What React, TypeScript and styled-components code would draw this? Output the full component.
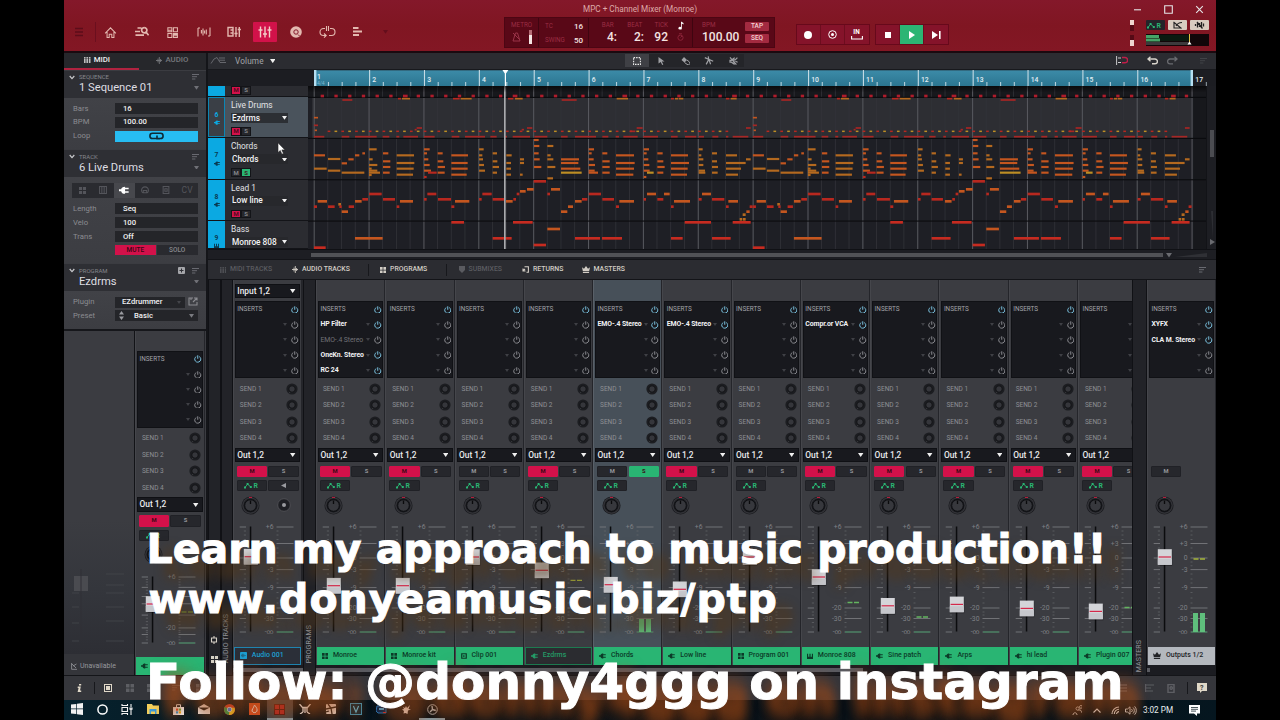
import React from "react";
import styled, { createGlobalStyle, css } from "styled-components";

const Global = createGlobalStyle`
  * { box-sizing: border-box; }
  body { margin: 0; background: #000; overflow: hidden; }
  svg { display: block; flex: none; }
`;

const RED = "#d3114a";
const GREEN = "#29b573";
const CYAN = "#0ba9e2";

const Screen = styled.div`
  position: relative;
  width: 1280px;
  height: 720px;
  padding: 0 64px;
  background: #000;
  overflow: hidden;
  font-family: Roboto, "Liberation Sans", sans-serif;
  color: #e6e6e8;
  line-height: 1;
  white-space: nowrap;
`;
const Window = styled.div`
  width: 1152px;
  height: 720px;
  display: flex;
  flex-direction: column;
  background: #141519;
  overflow: hidden;
`;

/* ---------- header ---------- */
const Header = styled.header`
  height: 51px;
  flex: none;
  display: flex;
  align-items: flex-start;
  background: linear-gradient(#84182a, #801622 50%, #831724);
  position: relative;
`;
const HeadIcons = styled.div`
  width: 440px;
  display: flex;
  padding-top: 22px;
`;
const HeadIcon = styled.div<{ $w?: number; $on?: boolean; $dim?: boolean }>`
  width: ${(p) => p.$w ?? 31}px;
  height: 20px;
  display: flex;
  align-items: center;
  justify-content: center;
  color: ${(p) => (p.$dim ? "#5c0d1a" : "#e3b9b0")};
  ${(p) => p.$on && css`background: #d2124a; border-radius: 1px; color: #f3cdc8;`}
`;
const HeadSplit = styled.div`
  width: 1px;
  height: 20px;
  background: #6b0f1e;
`;
const Display = styled.div`
  width: 271px;
  height: 31px;
  margin-top: 17px;
  display: flex;
  background: #590817;
  border: 1px solid #4c0613;
`;
const DisplayCell = styled.div<{ $w: number }>`
  width: ${(p) => p.$w}px;
  border-right: 1px solid #3f0510;
  display: flex;
  flex-direction: column;
  padding: 3.5px 5px 0 6px;
  gap: 4px;
`;
const DRow = styled.div`
  display: flex;
  align-items: center;
  justify-content: space-between;
  height: 10px;
`;
const Dim = styled.span`
  font-size: 6.3px;
  color: #9b2d44;
`;
const Num = styled.span<{ $big?: boolean }>`
  font-size: ${(p) => (p.$big ? 12 : 8)}px;
  font-weight: 500;
  color: #f4e4e2;
`;
const BeatGrid = styled.div`
  display: grid;
  grid-template-columns: 31px 27px 21px 16px;
  grid-template-rows: 7px 16px;
  align-items: center;
  justify-items: end;
  padding: 4px 0 0 0;
  width: 104px;
  border-right: 1px solid #3f0510;
`;
const BpmGrid = styled.div`
  display: flex;
  padding: 4px 5px 0 9px;
  width: 81px;
  justify-content: space-between;
`;
const Stack = styled.div<{ $gap?: number }>`
  display: flex;
  flex-direction: column;
  gap: ${(p) => p.$gap ?? 0}px;
`;
const Chip = styled.div`
  width: 24px;
  height: 9px;
  border-radius: 1px;
  background: #a32a40;
  color: #f2d3d3;
  font-size: 6.5px;
  font-weight: 500;
  display: flex;
  align-items: center;
  justify-content: center;
`;
const Transport = styled.div<{ $ml: number }>`
  margin: 24px 0 0 ${(p) => p.$ml}px;
  height: 21px;
  flex: none;
  display: flex;
  border: 1px solid #67091b;
`;
const TBtn = styled.div<{ $on?: boolean }>`
  width: 24px;
  flex: none;
  display: flex;
  align-items: center;
  justify-content: center;
  color: #fff;
  background: ${(p) => (p.$on ? "#2cb574" : "#85132a")};
  border-right: 1px solid #6d0d1e;
  &:last-child { border-right: none; }
  font-size: 6.4px;
  font-weight: 700;
`;
const InMark = styled.div`
  display: flex;
  flex-direction: column;
  align-items: center;
`;
const Title = styled.div`
  position: absolute;
  top: 4.5px;
  left: 0;
  right: 0;
  text-align: center;
  font-size: 8.2px;
  color: #dda9a8;
`;
const WinBtns = styled.div`
  position: absolute;
  right: 12px;
  top: 4.5px;
  display: flex;
  gap: 22px;
`;
const Status = styled.div`
  margin: 20px 0 0 181px;
  display: flex;
  gap: 12px;
`;
const StatusRow = styled.div`
  display: flex;
  gap: 3.5px;
`;
const StatusChip = styled.div<{ $dark?: boolean }>`
  width: 18.5px;
  height: 10px;
  border-radius: 1px;
  display: flex;
  align-items: center;
  justify-content: center;
  background: ${(p) => (p.$dark ? "#24242a" : "#d8ccc0")};
  color: ${(p) => (p.$dark ? GREEN : "#222")};
`;
const Lamp = styled.div<{ $flip?: boolean }>`
  width: 4px;
  height: 11px;
  background: ${(p) =>
    p.$flip ? "linear-gradient(#550a16 50%, #f0d5d0 50%)" : "linear-gradient(#f0d5d0 50%, #550a16 50%)"};
`;

/* ---------- body split ---------- */
const Body = styled.div`
  height: 624px;
  flex: none;
  display: flex;
  border-top: 2px solid #1a0a10;
`;
const Side = styled.aside`
  width: 141.5px;
  display: flex;
  flex-direction: column;
  background: #3b3c41;
`;
const Main = styled.main`
  width: 1008px;
  margin-left: 2.5px;
  display: flex;
  flex-direction: column;
  overflow: hidden;
`;
const SideTabs = styled.div`
  height: 16.5px;
  display: flex;
  background: #26272b;
`;
const SideTab = styled.div<{ $on?: boolean }>`
  flex: 1;
  display: flex;
  align-items: center;
  justify-content: center;
  gap: 3px;
  padding-right: ${(p) => (p.$on ? 9 : 0)}px;
  font-size: 7.8px;
  font-weight: 500;
  color: ${(p) => (p.$on ? "#eee" : "#77787d")};
  border-bottom: 2px solid ${(p) => (p.$on ? "#b02340" : "#26272b")};
`;
const SecHead = styled.div`
  height: 28px;
  flex: none;
  background: #2e2f34;
  border-top: 1px solid #3b3c41;
  padding: 2px 7px 0 5px;
`;
const SecTop = styled.div`
  display: flex;
  align-items: center;
  height: 9px;
  font-size: 6px;
  color: #85868c;
  gap: 4px;
  & > svg:last-child { margin-left: 3px; }
`;
const SecName = styled.div`
  display: flex;
  align-items: center;
  justify-content: space-between;
  height: 13px;
  padding-left: 10px;
  font-size: 11.2px;
  color: #dedee2;
`;
const Push = styled.div`
  flex: 1;
  min-width: 0;
`;
const SecBody = styled.div<{ $h: number; $pt?: number }>`
  height: ${(p) => p.$h}px;
  flex: none;
  background: linear-gradient(#414247, #3c3d42);
  padding: ${(p) => p.$pt ?? 5.5}px 8px 0 9px;
  display: flex;
  flex-direction: column;
  gap: 2.8px;
`;
const FieldRow = styled.div`
  display: grid;
  grid-template-columns: 42px 1fr;
  align-items: center;
  height: 11px;
  font-size: 7.7px;
  color: #8b8c91;
`;
const Field = styled.div<{ $blue?: boolean; $pad?: number; $w?: number }>`
  height: 11px;
  width: ${(p) => (p.$w ? p.$w + "px" : "auto")};
  background: ${(p) => (p.$blue ? "#27bdf2" : "#242529")};
  color: #f0f0f2;
  font-weight: 500;
  display: flex;
  align-items: center;
  padding: 0 4px 0 ${(p) => p.$pad ?? 8}px;
  ${(p) => p.$blue && css`justify-content: center; padding: 0; color: #0d2a36;`}
`;
const PresetName = styled.span`
  margin-left: 10px;
`;
const TypeRow = styled.div`
  height: 15px;
  margin: 0 0 3px -1px;
  display: flex;
  background: #2a2b30;
`;
const TypeCell = styled.div<{ $on?: boolean }>`
  flex: 1;
  display: flex;
  align-items: center;
  justify-content: center;
  font-size: 8.5px;
  color: ${(p) => (p.$on ? "#fff" : "#54555b")};
  background: ${(p) => (p.$on ? "#47484d" : "none")};
`;
const Pair = styled.div`
  display: flex;
  gap: 1px;
`;
const PairBtn = styled.div<{ $on?: boolean }>`
  flex: 1;
  height: 10.5px;
  display: flex;
  align-items: center;
  justify-content: center;
  font-size: 6.5px;
  font-weight: 500;
  background: ${(p) => (p.$on ? RED : "#292a2f")};
  color: ${(p) => (p.$on ? "#3a0514" : "#88898e")};
`;
const SideStrips = styled.div`
  flex: 1;
  display: flex;
  border-top: 2px solid #16171b;
  overflow: hidden;
`;
const GhostStrip = styled.div`
  width: 71px;
  border-right: 1.5px solid #121317;
  background: linear-gradient(#3b3c41 55%, #34363c 75%, #2d2e34 94%, #34353a 94%);
  display: flex;
  flex-direction: column;
  justify-content: flex-end;
`;
const Unavailable = styled.div`
  height: 18px;
  margin-top: 12px;
  display: flex;
  align-items: center;
  gap: 3px;
  padding-left: 7px;
  font-size: 7px;
  color: #97989d;
`;

/* ---------- arranger ---------- */
const ToolRow = styled.div`
  height: 16.5px;
  flex: none;
  display: flex;
  align-items: center;
  background: #2b2c31;
  border-bottom: 1px solid #18191d;
  padding: 0 9px 0 2px;
  color: #6d6e74;
`;
const VolLabel = styled.div`
  display: flex;
  align-items: center;
  gap: 6px;
  width: 399px;
  padding-left: 9px;
  font-size: 8.2px;
  letter-spacing: 0.15px;
  color: #a4a5aa;
`;
const Tools = styled.div`
  display: flex;
  height: 13px;
  width: 119px;
  background: #242529;
`;
const Tool = styled.div<{ $on?: boolean; $w?: number }>`
  width: ${(p) => p.$w ?? 24}px;
  flex: none;
  display: flex;
  align-items: center;
  justify-content: center;
  color: ${(p) => (p.$on ? "#eee" : "#a0a1a5")};
  background: ${(p) => (p.$on ? "#3f4045" : "none")};
`;
const RulerRow = styled.div`
  height: 16.5px;
  flex: none;
  display: flex;
  padding-left: 100.5px;
  background: #1c1d22;
`;
const Arrange = styled.div`
  height: 163px;
  flex: none;
  display: flex;
  background: #1b1c21;
  overflow: hidden;
`;
const Heads = styled.div`
  width: 100px;
  display: flex;
  flex-direction: column;
  overflow: hidden;
`;
const TrackHead = styled.div<{ $h: number; $on?: boolean }>`
  height: ${(p) => p.$h}px;
  flex: none;
  display: flex;
  overflow: hidden;
  background: ${(p) => (p.$on ? "#4a535c" : "#2b2c31")};
  border-bottom: 1px solid #131418;
`;
const TrackTag = styled.div<{ $on?: boolean }>`
  width: 17px;
  flex: none;
  display: flex;
  flex-direction: column;
  align-items: center;
  justify-content: flex-start;
  padding-top: 14px;
  gap: 1.5px;
  font-size: 6.8px;
  font-weight: 700;
  background: ${(p) => (p.$on ? "#3a3f46" : CYAN)};
  color: ${(p) => (p.$on ? CYAN : "#083b52")};
  border: ${(p) => (p.$on ? "1px solid #0c86b4" : "none")};
`;
const TrackInfo = styled.div<{ $up?: boolean }>`
  flex: 1;
  display: flex;
  flex-direction: column;
  padding: ${(p) => (p.$up ? 0 : 4)}px 20px 0 6px;
`;
const TrackName = styled.div`
  height: 12px;
  font-size: 8.4px;
  color: #e2e3e6;
`;
const TrackSel = styled.div<{ $on?: boolean }>`
  height: 10px;
  display: flex;
  align-items: center;
  justify-content: space-between;
  padding: 0 1px 0 1px;
  font-size: 8.3px;
  font-weight: 500;
  background: ${(p) => (p.$on ? "#2c2f34" : "#27282c")};
  color: #f2f2f4;
`;
const MiniMS = styled.div`
  margin-top: 4px;
  display: flex;
  width: 20px;
  height: 8.5px;
`;
const MiniTop = styled(MiniMS)`
  margin-top: 0;
`;
const Mini = styled.div<{ $c?: string }>`
  flex: 1;
  border: 1px solid #131418;
  background: ${(p) => p.$c ?? "#26272c"};
  color: ${(p) => (p.$c ? "#400818" : "#909196")};
  font-size: 6px;
  font-weight: 500;
  display: flex;
  align-items: center;
  justify-content: center;
`;
const HScroll = styled.div`
  height: 10px;
  flex: none;
  background: #1d1e23;
  border-top: 1px solid #101115;
  padding: 3px 0 0 103px;
  display: flex;
  gap: 3px;
`;
const HThumb = styled.div`
  width: 852px;
  height: 4px;
  background: #515256;
`;
const VScroll = styled.div`
  flex: 1;
  background: #1d1e23;
  border-left: 1px solid #121317;
  padding: 44px 0 0 3px;
`;
const VThumb = styled.div`
  width: 4px;
  height: 27px;
  background: #4b4c51;
`;

/* ---------- mixer ---------- */
const Tabs = styled.div`
  height: 21px;
  flex: none;
  display: flex;
  align-items: center;
  background: #2b2c31;
  border-top: 1px solid #131418;
  border-bottom: 1px solid #131418;
  padding-right: 10px;
`;
const Tab = styled.div<{ $ml: number; $w: number; $dim?: boolean }>`
  margin-left: ${(p) => p.$ml}px;
  width: ${(p) => p.$w}px;
  display: flex;
  align-items: center;
  gap: 4px;
  font-size: 6.9px;
  font-weight: 500;
  color: ${(p) => (p.$dim ? "#5a5b60" : "#d2cdc5")};
`;
const TabSplit = styled.div`
  width: 1px;
  height: 12px;
  background: #17181c;
`;
const Mixer = styled.div`
  flex: 1;
  display: flex;
  overflow: hidden;
  background: #24252a;
`;
const Gutter = styled.div<{ $w: number }>`
  width: ${(p) => p.$w}px;
  flex: none;
  background: #222328;
  border-left: 1.5px solid #101115;
  border-right: 1.5px solid #101115;
  display: flex;
  flex-direction: column;
  align-items: center;
  justify-content: flex-end;
  padding-bottom: 12px;
  gap: 12px;
  color: #d5d0c5;
`;
const VText = styled.div<{ $low?: boolean }>`
  writing-mode: vertical-rl;
  transform: rotate(180deg);
  font-size: 7px;
  color: #93949a;
  letter-spacing: 0.1px;
  margin-bottom: ${(p) => (p.$low ? -9 : 0)}px;
`;
const Bank = styled.div<{ $w: number }>`
  width: ${(p) => p.$w}px;
  flex: none;
  display: flex;
  overflow: hidden;
  height: 395px;
  flex-direction: column;
`;
const BankStrips = styled.div`
  display: flex;
  height: 384.5px;
  overflow: hidden;
`;
const BankScroll = styled.div<{ $t: number }>`
  height: 10.5px;
  background: #1b1c21;
  padding-top: 3.5px;
  &::before {
    content: "";
    display: block;
    width: ${(p) => p.$t}px;
    height: 4px;
    background: #5a5b61;
  }
`;
const StripBox = styled.div<{ $on?: boolean; $side?: boolean }>`
  width: ${(p) => (p.$side ? 70 : 69.27)}px;
  flex: none;
  display: flex;
  flex-direction: column;
  background: ${(p) => (p.$on ? "#475059" : "#3b3c41")};
  border-left: 1px solid ${(p) => (p.$on ? "#596068" : "#45464b")};
  border-right: 1px solid #24252a;
  padding-top: ${(p) => (p.$side ? 19.5 : 3.5)}px;
`;
const Picker = styled.div<{ $hide?: boolean; $mt?: number }>`
  height: 14.7px;
  margin: ${(p) => p.$mt ?? 0}px 1px 0 1px;
  display: flex;
  align-items: center;
  justify-content: space-between;
  padding: 0 3.5px 0 1.5px;
  font-size: 8.4px;
  font-weight: 500;
  color: #ececee;
  background: #18191e;
  border: 1px solid #0f1014;
  visibility: ${(p) => (p.$hide ? "hidden" : "visible")};
`;
const Inserts = styled.div<{ $side?: boolean }>`
  height: 77.5px;
  margin: ${(p) => (p.$side ? 0 : 2.8)}px 1px 2.2px 1px;
  background: #18191e;
  border: 1px solid #101115;
  padding: 0 0.5px 0 1.5px;
`;
const InsertRow = styled.div<{ $tone?: "head" | "on" | "off" }>`
  height: 15.2px;
  display: flex;
  align-items: center;
  font-size: ${(p) => (p.$tone === "head" ? 6.4 : 6.9)}px;
  font-weight: ${(p) => (p.$tone === "on" ? 700 : 400)};
  letter-spacing: ${(p) => (p.$tone === "head" ? 0 : -0.1)}px;
  color: ${(p) => (p.$tone === "on" ? "#f2f2f4" : p.$tone === "head" ? "#a3a4a9" : "#707176")};
`;
const PowerSlot = styled.div`
  margin-left: 3.8px;
`;
const SendRow = styled.div`
  height: 16.5px;
  display: flex;
  align-items: center;
  justify-content: space-between;
  padding: 0 3px 0 6px;
  font-size: 6.5px;
  color: #8e8f94;
`;
const BtnRow = styled.div<{ $mt: number }>`
  height: 11.3px;
  margin: ${(p) => p.$mt}px 2px 0 3px;
  display: grid;
  grid-template-columns: 30.3px 30.3px;
  gap: 1.2px;
`;
const Btn = styled.div<{ $c?: string }>`
  background: ${(p) => p.$c ?? "#26272c"};
  color: ${(p) => (p.$c ? "#3d0a18" : "#94959a")};
  border-radius: 1px;
  border: 1px solid ${(p) => p.$c ?? "#202126"};
  font-size: 5.8px;
  font-weight: 700;
  display: flex;
  align-items: center;
  justify-content: center;
`;
const KnobRow = styled.div`
  height: 20px;
  margin: 3.7px 0 4.2px;
  padding-left: 7.5px;
  display: flex;
  align-items: center;
  gap: 17px;
`;
const Label = styled.div<{ $kind: "green" | "dark" | "blue" | "grey"; $h?: number }>`
  height: ${(p) => p.$h ?? 17.5}px;
  flex: none;
  margin-top: auto;
  display: flex;
  align-items: center;
  gap: 5px;
  padding-left: 5px;
  font-size: 7px;
  font-weight: 500;
  background: ${(p) => ({ green: GREEN, dark: "#2b2c30", blue: "#2b2f38", grey: "#b4b8be" }[p.$kind])};
  color: ${(p) => ({ green: "#0c3b28", dark: "#249a66", blue: "#1d9fd3", grey: "#222327" }[p.$kind])};
  border: ${(p) => ({ green: "none", dark: "1px solid #1d7a50", blue: "1px solid #1f84b0", grey: "none" }[p.$kind])};
`;

/* ---------- footers ---------- */
const BottomBar = styled.div`
  height: 25px;
  flex: none;
  display: flex;
  align-items: center;
  background: #35363b;
  border-top: 1px solid #141519;
  color: #6d6e73;
`;
const BarItem = styled.div<{ $w: number; $bright?: boolean }>`
  width: ${(p) => p.$w}px;
  display: flex;
  justify-content: center;
  color: ${(p) => (p.$bright ? "#e0d8c8" : "#5d5e63")};
`;
const Taskbar = styled.div`
  height: 20px;
  flex: none;
  display: flex;
  align-items: center;
  background: linear-gradient(90deg, #06222e, #07151d 20%, #0a1218 70%, #05161f);
  color: #f2f2f2;
`;
const Task = styled.div<{ $on?: boolean; $line?: boolean }>`
  width: 25.4px;
  height: 20px;
  display: flex;
  align-items: center;
  justify-content: center;
  background: ${(p) => (p.$on ? "#3b474f" : "none")};
  border-bottom: 2px solid ${(p) => (p.$line ? "#8aa4b0" : "transparent")};
`;
const Tray = styled.div`
  margin-left: auto;
  width: 149px;
  height: 20px;
  display: flex;
  align-items: center;
  font-size: 8.2px;
  color: #e8eef0;
`;
const TrayItem = styled.div<{ $w: number }>`
  width: ${(p) => p.$w}px;
  display: flex;
  justify-content: center;
`;

/* ---------- caption over the window ---------- */
const Caption = styled.div<{ $top: number; $size: number; $ls: number; $hot?: boolean; $x: number }>`
  position: absolute;
  left: ${(p) => p.$x}px;
  top: ${(p) => p.$top}px;
  font-family: "DejaVu Sans", sans-serif;
  font-weight: 700;
  font-size: ${(p) => p.$size}px;
  letter-spacing: ${(p) => p.$ls}px;
  line-height: 1;
  color: #fff;
  -webkit-text-stroke: 1px #fff;
  text-shadow: ${(p) =>
    p.$hot
      ? "18px 16px 11px rgba(176, 78, 20, 0.5), 14px 6px 14px rgba(170, 76, 24, 0.5), 16px 26px 14px rgba(140, 56, 10, 0.35)"
      : "16px 15px 11px rgba(84, 54, 22, 0.7)"};
`;
const Cursor = styled.div`
  position: absolute;
  left: 277px;
  top: 142px;
`;

/* ---------- small drawings ---------- */
const Caret = ({ c = "#f0f0f0", s = 5.4 }: { c?: string; s?: number }) => (
  <svg width={s} height={s * 0.75} viewBox="0 0 8 6"><path d="M0 0H8L4 6Z" fill={c} /></svg>
);
const Lines = ({ c = "#717278" }: { c?: string }) => (
  <svg width="7" height="6" viewBox="0 0 7 6"><path d="M0 .5H7M0 2.7H5M0 5H3.4" stroke={c} strokeWidth=".9" /></svg>
);
const Chevron = () => (
  <svg width="6" height="5" viewBox="0 0 6 5"><path d="M.7 1L3 3.6L5.3 1" fill="none" stroke="#c8c9cc" strokeWidth="1.2" /></svg>
);
const Plug = ({ s = 7 }: { s?: number }) => (
  <svg width={s} height={s * 0.86} viewBox="0 0 14 12" fill="currentColor">
    <path d="M0 4.6H3C3.5 2.2 5 1 8.5 1V2.6H13.5V4.6H8.5V7.4H13.5V9.4H8.5V11C5 11 3.5 9.8 3 7.4H0Z" />
  </svg>
);
const Pads = ({ s = 6 }: { s?: number }) => (
  <svg width={s} height={s} viewBox="0 0 8 8" fill="currentColor"><path d="M0 0H3.5V3.5H0ZM4.5 0H8V3.5H4.5ZM0 4.5H3.5V8H0ZM4.5 4.5H8V8H4.5Z" /></svg>
);
const Keys = ({ s = 6 }: { s?: number }) => (
  <svg width={s} height={s} viewBox="0 0 8 8" fill="currentColor"><path d="M0 1H1.5V5H3.2V1H4.8V5H6.5V1H8V8H0Z" /></svg>
);
const Crown = () => (
  <svg width="8" height="7" viewBox="0 0 8 7" fill="currentColor"><path d="M0 1.2L2 2.8L4 0L6 2.8L8 1.2L7.2 5H.8ZM.9 5.7H7.1V7H.9Z" /></svg>
);
const ClipIcon = () => (
  <svg width="6" height="6" viewBox="0 0 8 8"><path d="M1 1H7V7H1Z" fill="none" stroke="currentColor" strokeWidth="1.6" /><path d="M3 2.5L5.6 4L3 5.5Z" fill="currentColor" /></svg>
);
const WaveIcon = () => (
  <svg width="7" height="7" viewBox="0 0 8 8"><rect width="8" height="8" rx="1" fill="currentColor" /><path d="M2 3V5M3.3 2V6M4.6 3V5M6 3.6V4.4" stroke="#22303c" strokeWidth=".7" /></svg>
);
const Spark = () => (
  <svg width="6" height="7" viewBox="0 0 6 7" stroke="currentColor" fill="none"><path d="M0 3.5H6M2 1.6V5.4M3.3 0V7M4.6 2V5" strokeWidth=".9" /></svg>
);
const Grid9 = () => (
  <svg width="6.5" height="6" viewBox="0 0 7 6" fill="currentColor"><path d="M0 0H1.7V1.5H0ZM2.6 0H4.3V1.5H2.6ZM5.2 0H7V1.5H5.2ZM0 2.2H1.7V3.7H0ZM2.6 2.2H4.3V3.7H2.6ZM5.2 2.2H7V3.7H5.2ZM0 4.4H1.7V6H0ZM2.6 4.4H4.3V6H2.6ZM5.2 4.4H7V6H5.2Z" /></svg>
);
const Power = ({ on }: { on?: boolean }) => (
  <svg width="7.5" height="7.5" viewBox="0 0 10 10" fill="none" stroke={on ? "#7cc4e2" : "#8d8e93"} strokeWidth="1.3">
    <path d="M3 2.1A4 4 0 1 0 7 2.1M5 .4V5" />
  </svg>
);
const SendKnob = () => (
  <svg width="12" height="12" viewBox="0 0 12 12"><circle cx="6" cy="6" r="5.6" fill="#1c1d21" /><circle cx="6" cy="6" r="3.2" fill="#35363b" stroke="#0e0f12" strokeWidth=".8" /><path d="M4 9L3.2 10.2" stroke="#45464b" strokeWidth=".7" /></svg>
);
const Knob = () => (
  <svg width="19" height="19" viewBox="0 0 19 19">
    <circle cx="9.5" cy="9.5" r="9" fill="#1b1c20" /><circle cx="9.5" cy="9.5" r="7.7" fill="none" stroke="#47484d" strokeWidth=".7" />
    <circle cx="9.5" cy="9.5" r="5.8" fill="#37383d" stroke="#0c0d10" strokeWidth="1" /><path d="M9.5 4.5V8" stroke="#0a0a0c" strokeWidth="1.3" />
    <path d="M8 1.4H11" stroke="#c2203f" strokeWidth="1" />
  </svg>
);
const MonKnob = () => (
  <svg width="14" height="14" viewBox="0 0 14 14"><circle cx="7" cy="7" r="6.3" fill="#1e1f24" stroke="#55565b" strokeWidth=".8" /><circle cx="7" cy="7" r="2" fill="#9a9ba0" /></svg>
);
const Auto = () => (
  <svg width="16" height="7" viewBox="0 0 16 7">
    <path d="M1 5.4L3.6 2.2L6.6 4.8" fill="none" stroke={GREEN} strokeWidth=".9" />
    <path d="M0 4.4H2V6.4H0ZM2.6 1H4.6V3H2.6ZM5.8 4H7.8V6H5.8Z" fill={GREEN} />
    <text x="9.5" y="6" fontFamily="Roboto, sans-serif" fontSize="6.8" fontWeight="700" fill={GREEN}>R</text>
  </svg>
);

type FaderProps = { cap: number; short?: boolean; peak?: number; peakColor?: string; level?: number };
const MARKS: [string, number][] = [["+6", 8], ["+3", 24.5], ["0", 39], ["-3", 50.6], ["-9", 68.6], ["-20", 89], ["-30", 99.5], ["-∞", 113]];
const MINOR = [12, 16, 20.5, 29, 34, 43, 46.8, 55, 60, 64, 73.5, 79, 84, 93, 96, 103.5, 108];
const Fader = ({ cap, short, peak, peakColor = "#63b55f", level }: FaderProps) => {
  const k = short ? 66 / 105 : 1;
  const y = (v: number) => 8 + (v - 8) * k;
  const h = short ? 82 : 122;
  return (
    <svg width="67" height={h} viewBox={`0 0 67 ${h}`}>
      {MARKS.map(([t, v]) => (
        <g key={t}>
          <path d={`M5.7 ${y(v)}H12M42.5 ${y(v)}H59.5`} stroke="#77787d" strokeWidth=".9" />
          {(!short || ["+6", "-20", "-∞"].includes(t)) && (
            <text x="39.5" y={y(v) + 2.2} textAnchor="end" fontSize="6.8" fill="#7f8085" fontFamily="Roboto, sans-serif">{t}</text>
          )}
        </g>
      ))}
      {MINOR.map((v) => (
        <path key={v} d={`M9.8 ${y(v)}H12M42.5 ${y(v)}H44.5`} stroke="#66676c" strokeWidth=".7" />
      ))}
      <rect x="15.8" y="7.5" width="1.5" height={105 * k} fill="#0b0c0e" />
      <path d={`M43 ${y(113)}H59`} stroke="#3d8a5c" strokeWidth="1" />
      {peak !== undefined && <path d={`M45.5 ${peak}H50.5M52 ${peak}H57`} stroke={peakColor} strokeWidth="1.3" />}
      {level !== undefined && <path d={`M45 ${113 - level}H50V113H45ZM52 ${113 - level}H57V113H52Z`} fill="#5fbf7c" />}
      <rect x="10.3" y={cap - 6.5} width="14" height="15.5" fill="#000" opacity=".3" />
      <rect x="9.8" y={cap - 7.8} width="14" height="15.6" fill="#d4d5d9" />
      <rect x="9.8" y={cap + 1.8} width="14" height="6" fill="#c6c7cc" />
      <rect x="10.6" y={cap - 0.6} width="12.4" height="1.2" fill="#d4284a" />
    </svg>
  );
};

type StripProps = {
  name: string; icon: React.ReactNode; kind?: "green" | "dark" | "blue" | "grey";
  inserts?: ([string, boolean] | null)[]; input?: boolean; mute?: boolean; solo?: boolean; on?: boolean;
  side?: boolean; master?: boolean; fader: FaderProps;
};
const Strip = ({ name, icon, kind = "green", inserts = [], input, mute, solo, on, side, master, fader }: StripProps) => (
  <StripBox $on={on} $side={side}>
    {!side && <Picker $hide={!input}>Input 1,2<Caret /></Picker>}
    <Inserts $side={side}>
      <InsertRow $tone="head">INSERTS<Push /><Power on /></InsertRow>
      {[0, 1, 2, 3].map((i) => {
        const it = inserts[i];
        return (
          <InsertRow key={i} $tone={it ? (it[1] ? "on" : "off") : undefined}>
            {it?.[0]}<Push /><Caret c="#3f4045" s={4} /><PowerSlot><Power on={it?.[1]} /></PowerSlot>
          </InsertRow>
        );
      })}
    </Inserts>
    {[1, 2, 3, 4].map((n) => <SendRow key={n}>{!master && <>SEND {n}<SendKnob /></>}</SendRow>)}
    <Picker $hide={master} $mt={1}>Out 1,2<Caret /></Picker>
    <BtnRow $mt={3.5}>
      <Btn $c={mute ? RED : undefined}>M</Btn>
      {!master && <Btn $c={solo ? GREEN : undefined}>S</Btn>}
    </BtnRow>
    <BtnRow $mt={3}>
      {!master && <Btn><Auto /></Btn>}
      {input && <Btn><svg width="5" height="5" viewBox="0 0 5 5"><path d="M5 0V5L0 2.5Z" fill="#9a9ba0" /></svg></Btn>}
    </BtnRow>
    <KnobRow><Knob />{input && <MonKnob />}</KnobRow>
    <Fader {...fader} short={side} />
    <Label $kind={kind} $h={side ? 18 : undefined}>{icon}{name}</Label>
  </StripBox>
);

const PROGRAMS: StripProps[] = [
  { name: "Monroe", icon: <Pads />, mute: true, inserts: [["HP Filter", true], ["EMO-.4 Stereo", false], ["OneKn. Stereo", true], ["RC 24", true]], fader: { cap: 66.7 } },
  { name: "Monroe kit", icon: <Pads />, mute: true, fader: { cap: 66.7, peak: 51.5, peakColor: "#8a8a3a" } },
  { name: "Clip 001", icon: <ClipIcon />, fader: { cap: 38 } },
  { name: "Ezdrms", icon: <Plug />, kind: "dark", mute: true, fader: { cap: 51.3, peak: 61.3, peakColor: "#9aa03a" } },
  { name: "Chords", icon: <Plug />, solo: true, on: true, inserts: [["EMO-.4 Stereo", true]], fader: { cap: 65.7, level: 13 } },
  { name: "Low line", icon: <Plug />, mute: true, inserts: [["EMO-.4 Stereo", true]], fader: { cap: 70.3 } },
  { name: "Program 001", icon: <Pads />, fader: { cap: 38 } },
  { name: "Monroe 808", icon: <Keys />, mute: true, inserts: [["Compr.or VCA", true]], fader: { cap: 58, peak: 83.5 } },
  { name: "Sine patch", icon: <Plug />, mute: true, fader: { cap: 86.8, peak: 98 } },
  { name: "Arps", icon: <Plug />, mute: true, fader: { cap: 85.4 } },
  { name: "hi lead", icon: <Plug />, mute: true, fader: { cap: 89.4 } },
  { name: "Plugin 007", icon: <Plug />, mute: true, fader: { cap: 92.4, peak: 88.5 } },
];

/* ---------- note clips: x, width, y in thirds of a pixel ---------- */
type Note = [number, number, number, string?];
const R = "#b8281f", O = "#c4561f", A = "#b4691f", Y = "#bd8e24";
const col = (x: number, items: [number, number][], c: string): Note[] => items.map(([y, w]) => [x, w, y, c]);
const CHORDS: Note[] = [
  [42, 33, 271, O], [42, 38, 311, A], [84, 37, 282, A], [84, 37, 317, A], [125, 16, 295, O], [125, 68, 323, A],
  [145, 16, 283, O], [165, 13, 271, O], [187, 8, 265, O],
  ...col(207, [[253, 23], [283, 11], [300, 25], [311, 8], [317, 25], [323, 33], [330, 8]], A),
  ...col(249, [[265, 16], [289, 22], [306, 22], [323, 20]], O),
  ...col(290, [[271, 52], [294, 53], [311, 51], [329, 49]], A),
  ...col(372, [[253, 17], [265, 9], [283, 13], [300, 17], [317, 21]], O), [384, 26, 323, R], [372, 8, 336, R],
  ...col(413, [[265, 15], [289, 17], [306, 22], [323, 21]], O),
  ...col(454, [[271, 50], [294, 49], [311, 49], [329, 46]], O),
  ...col(537, [[253, 14], [271, 10], [283, 12], [300, 15], [317, 18]], A),
  ...col(578, [[265, 13], [289, 14], [306, 19], [323, 13]], A),
  ...col(619, [[271, 16], [294, 14], [311, 14], [329, 14]], A),
  ...col(660, [[283, 12], [294, 12], [329, 8]], A),
  ...col(702, [[225, 14], [243, 16], [265, 14], [283, 17], [306, 22]], O),
  ...col(742, [[243, 18], [271, 10], [283, 18], [306, 24], [340, 17]], A),
  ...col(783, [[283, 54], [294, 52], [311, 58]], O), [783, 62, 323, Y],
  ...col(866, [[253, 16], [265, 9], [283, 15], [300, 19], [317, 18], [323, 28]], O),
  ...col(907, [[265, 15], [289, 22], [306, 22], [323, 22]], O),
  ...col(948, [[271, 54], [294, 56], [311, 54], [329, 52]], O),
  ...col(1031, [[253, 16], [265, 9], [283, 14], [300, 17], [317, 18], [336, 8]], O), [1041, 20, 323, Y],
  ...col(1072, [[265, 16], [289, 18], [306, 22], [323, 18]], O),
  ...col(1113, [[271, 51], [294, 54], [311, 50], [329, 48]], O),
  ...col(1196, [[253, 12], [271, 8], [283, 14], [300, 14], [317, 19], [323, 20]], A),
  ...col(1236, [[265, 15], [289, 15], [306, 18], [323, 17]], A),
  ...col(1278, [[271, 33], [294, 59], [311, 45], [329, 36]], A), [1338, 14, 283, A],
];
const LEAD: Note[] = [
  [42, 9, 425], [53, 28, 409, O], [84, 20, 425], [115, 8, 418, A], [118, 7, 425], [125, 19, 440, O], [146, 16, 425],
  [165, 20, 409, O], [187, 17, 403], [207, 38, 387], [249, 36, 403], [290, 8, 425], [300, 39, 409, O], [372, 8, 403],
  [382, 27, 387], [414, 39, 403], [454, 9, 425], [465, 43, 409, O], [537, 8, 403], [547, 28, 387], [578, 34, 403],
  [618, 20, 409, O], [640, 8, 403], [650, 8, 387], [660, 17, 379, O], [681, 20, 373, O], [701, 37, 349], [742, 8, 387],
  [753, 27, 373, O], [783, 19, 440, O], [804, 15, 425, O], [825, 20, 409, O], [846, 16, 403], [866, 37, 387], [907, 35, 403],
  [948, 9, 425], [958, 44, 409, O], [1031, 7, 403], [1041, 27, 387, O], [1072, 18, 403], [1092, 17, 387, O], [1113, 8, 425],
  [1122, 48, 409, O], [1196, 9, 403], [1206, 27, 387, O], [1236, 37, 403], [1278, 8, 425], [1285, 29, 409, O],
  [1319, 8, 463, A], [1329, 8, 463, A], [1328, 9, 449, A], [1339, 10, 440, O], [1349, 9, 425],
];
const BASS: Note[] = [
  [42, 35, 548], [165, 83, 520, O], [454, 38, 472], [578, 57, 520], [639, 59, 472], [701, 37, 540], [742, 38, 492, O],
  [825, 75, 520], [906, 60, 520], [1113, 35, 520], [1154, 79, 472], [1236, 56, 520], [1298, 54, 472],
];
const DRUMS: Note[] = [
  [127, 30, 105], [294, 9, 101, R], [306, 24, 101, A], [459, 20, 101, R], [482, 33, 101, A], [624, 16, 101, R], [645, 23, 101, A],
  [785, 45, 105], [950, 34, 101, A], [1113, 9, 101, R], [1125, 10, 101, A], [1137, 13, 101, A], [1278, 10, 101, R], [1292, 18, 101, A],
  [42, 12, 158, O], [42, 12, 181], [44, 7, 196, O], [350, 16, 189], [344, 6, 194], [681, 16, 189], [665, 7, 194],
  [1010, 18, 189], [990, 16, 199], [1338, 14, 189],
  ...([[42, 31], [125, 23], [165, 65], [248, 20], [289, 9], [310, 44], [372, 32], [455, 23], [495, 60], [571, 19], [613, 8], [638, 52],
    [703, 39], [783, 20], [825, 63], [907, 18], [947, 10], [970, 43], [1030, 44], [1113, 20], [1155, 34], [1196, 16], [1237, 18],
    [1278, 7], [1298, 47]] as [number, number][]).map(([x, w]): Note => [x, w, 215]),
];
const HATS: Note[] = Array.from({ length: 59 }, (_, i): Note => [83 + i * 20.58, 8, 199, i % 2 ? Y : R]);
const BAR = 164.6;
const Notes = ({ list, h, c = R }: { list: Note[]; h: number; c?: string }) => (
  <>
    {[0, BAR * 8].map((off) =>
      list.map(([x, w, y, f], i) => <rect key={off + "-" + i} x={x + off} y={y - h / 2} width={w} height={h} fill={f ?? c} />)
    )}
  </>
);
const Clips = () => (
  <svg width="898" height="163" viewBox="24 63 2694 489" preserveAspectRatio="none">
    <rect x="24" y="63" width="2694" height="489" fill="#1e1f25" />
    <rect x="36" y="98" width="2639" height="122" fill="#2d2e33" />
    <rect x="24" y="63" width="2694" height="34" fill="#17181c" />
    {Array.from({ length: 65 }, (_, i) => (
      <rect key={i} x={41 + i * (BAR / 4)} y="63" width={i % 4 ? 2.4 : 3.2} height="489" fill={i % 4 ? "#323339" : "#56575d"} />
    ))}
    <rect x="2680" y="63" width="38" height="489" fill="#17181c" />
    {[97, 220, 344, 468].map((y) => <rect key={y} x="24" y={y - 1.5} width="2694" height="3.4" fill="#0b0c0f" />)}
    {Array.from({ length: 64 }, (_, i) => (
      <rect key={i} x={62 + i * (BAR / 4)} y="89" width={i % 8 === 6 ? 14 : 10} height="8" fill="#b01c2c" />
    ))}
    <Notes list={DRUMS} h={5} c="#a82624" />
    <Notes list={HATS} h={4.5} />
    <Notes list={CHORDS} h={6.5} />
    <Notes list={LEAD} h={8} />
    <Notes list={BASS} h={8} c="#c62b20" />
    <rect x="612" y="63" width="5" height="489" fill="#a9aaad" />
    <defs><linearGradient id="sh" x2="0" y2="1"><stop stopColor="#000" stopOpacity=".6" /><stop offset="1" stopColor="#000" stopOpacity="0" /></linearGradient></defs>
    <rect x="24" y="63" width="2694" height="20" fill="url(#sh)" />
  </svg>
);
const Ruler = () => (
  <svg width="903" height="16.5" viewBox="0 0 903 16.5">
    <defs><linearGradient id="rl" x2="0" y2="1"><stop stopColor="#3c8ba8" /><stop offset="1" stopColor="#2b7590" /></linearGradient></defs>
    <rect x="5.5" y=".3" width="878.5" height="15.8" fill="url(#rl)" />
    {Array.from({ length: 68 }, (_, i) => (
      <rect key={i} x={5.2 + i * 13.717} y={i % 4 ? 12 : 0} width="1.1" height={i % 4 ? 4 : 16} fill="#d6e6ec" opacity={i === 64 ? 0 : i >= 65 ? 0.6 : i % 4 ? 0.8 : 0.9} />
    ))}
    <rect x="5" y="0" width="2.4" height="16" fill="#b5def0" />
    <rect x="881.6" y="0" width="2.4" height="16" fill="#b5def0" />
    {Array.from({ length: 17 }, (_, i) => (
      <text key={i} x={(i ? 8.4 : 8) + i * 54.87} y={i ? 11.6 : 9} fontSize="6.8" fontWeight="500" fill="#e4f0f5" fontFamily="Roboto, sans-serif">{i + 1}</text>
    ))}
    <text x="8" y="14.8" fontSize="5" fill="#7fb8cc" fontFamily="Roboto, sans-serif">4/4</text>
    <path d="M193.4 0H199.4L197 3.4V16.5H195.8V3.4Z" fill="#fff" />
  </svg>
);

const P = ({ d, w = 14, h = 14, vb = "0 0 14 14", fill, sw = 1.1 }: { d: string; w?: number; h?: number; vb?: string; fill?: boolean; sw?: number }) => (
  <svg width={w} height={h} viewBox={vb} fill={fill ? "currentColor" : "none"} stroke={fill ? "none" : "currentColor"} strokeWidth={sw}><path d={d} /></svg>
);

const TRACKS = [
  { n: "6", name: "Live Drums", sel: "Ezdrms", on: true, m: true },
  { n: "7", name: "Chords", sel: "Chords", s: true },
  { n: "8", name: "Lead 1", sel: "Low line", m: true },
  { n: "9", name: "Bass", sel: "Monroe 808", keys: true, last: true },
];

const SectionHead = ({ kind, name, add }: { kind: string; name: string; add?: boolean }) => (
  <SecHead>
    <SecTop><Chevron />{kind}<Push />{add && <svg width="7" height="7" viewBox="0 0 7 7"><rect width="7" height="7" rx="1" fill="#a5a6aa" /><path d="M3.5 1.5V5.5M1.5 3.5H5.5" stroke="#2e2f34" /></svg>}<Lines /></SecTop>
    <SecName>{name}<Caret c="#6f7076" s={5} /></SecName>
  </SecHead>
);

export default function App() {
  return (
    <Screen>
      <Global />
      <Window>
        <Header>
          <HeadIcons>
            <HeadIcon $w={30.5} $dim><P d="M3 3.5H11M3 7H11M3 10.5H11" sw={1.4} /></HeadIcon>
            <HeadSplit />
            <HeadIcon $w={30.5}><P w={13} h={13} d="M1.2 8L7 2L12.8 8M3.3 6.5V12.5H5.6V9H8.4V12.5H10.7V6.5" /></HeadIcon>
            <HeadIcon $w={31}><P sw={1.7} d="M2.5 3H6.5M0 6.5H5M.5 10.2H9M9.3 2.6A2.6 2.6 0 1 1 9.2 2.6M11 7L13.6 10.3" /></HeadIcon>
            <HeadIcon><P w={13} h={13} sw={1.1} d="M2 2H6.3V6.3H2ZM8 2H12.3V6.3H8ZM2 8H6.3V12.3H2ZM8 8H12.3V12.3H8ZM2 4.5H6M8 10.5H12M8 9.2H12" /></HeadIcon>
            <HeadIcon><P d="M1 3V11.5M1 3H3M13 11V2.5M13 11H11M4.4 5V8.5M6 3.5V10.5M7.6 5.5V8.5M9.3 4.5V9.5" /></HeadIcon>
            <HeadIcon $w={30.5}><P sw={1.4} d="M1 2.5H6V11H1ZM3.5 5H6M3.5 8H6M9 2V12M7.4 8.5H10.6M12.3 2V12M10.7 4.5H13.9" /></HeadIcon>
            <HeadIcon $w={3.5} />
            <HeadIcon $w={24} $on><P sw={1.4} d="M2.5 1.5V12.5M.5 5H4.5M7 1.5V12.5M5 9H9M11.5 1.5V12.5M9.5 5H13.5" /></HeadIcon>
            <HeadIcon $w={38}>
              <svg width="12" height="12" viewBox="0 0 12 12"><circle cx="6" cy="6" r="5.8" fill="currentColor" /><circle cx="6" cy="6" r="2.2" fill="none" stroke="#84182a" strokeWidth="1" /><path d="M8 8.5L9.5 10" stroke="#84182a" /></svg>
            </HeadIcon>
            <HeadIcon $w={24}><P w={17} h={14} vb="0 0 17 14" d="M6 3.5H4.5A3.5 3.5 0 0 0 4.5 10.5H7M5 8.5L7.2 10.5L5 12.6M11 3.5H12.5A3.5 3.5 0 0 1 12.5 10.5H10M7.5 1V6M9.5 1V6" /></HeadIcon>
            <HeadIcon $w={37}><P sw={1.9} d="M2 3H7.5M2 6.5H11M2 10H8" /></HeadIcon>
            <HeadIcon $w={18} $dim><Caret c="#640e1c" s={5} /></HeadIcon>
          </HeadIcons>
          <Display>
            <DisplayCell $w={34}>
              <Dim>METRO</Dim>
              <DRow>
                <svg width="11" height="11" viewBox="0 0 11 11" fill="none" stroke="#9b3349"><path d="M2 10L4.5 2H6.5L9 10ZM2 2L8 8" /></svg>
                <svg width="4" height="14" viewBox="0 0 4 14"><rect width="3" height="14" fill="#b56a74" /><rect y="5" width="3" height="9" fill="#f5e6e4" /></svg>
              </DRow>
            </DisplayCell>
            <DisplayCell $w={50}>
              <DRow><Dim>TC</Dim><Num>16</Num></DRow>
              <DRow><Dim>SWING</Dim><Num>50</Num></DRow>
            </DisplayCell>
            <BeatGrid>
              <Dim>BAR&nbsp;&nbsp;&nbsp;&nbsp;</Dim><Dim>BEAT&nbsp;&nbsp;&nbsp;</Dim><Dim>TICK</Dim>
              <svg width="6" height="9" viewBox="0 0 6 9"><path d="M3 7V.5L5.5 2V3.5L3.8 2.5V7A1.7 1.4 0 1 1 3 6Z" fill="#fff" /></svg>
              <Num $big>4:&nbsp;</Num><Num $big>2:&nbsp;</Num><Num $big>92</Num>
              <svg width="7" height="8" viewBox="0 0 7 8" fill="none" stroke="#8b2338"><circle cx="3.5" cy="4.7" r="2.6" /><path d="M2 .8H5M3.5 4.5L5 3" /></svg>
            </BeatGrid>
            <BpmGrid>
              <Stack $gap={3}><Dim>BPM</Dim><Num $big>100.00</Num></Stack>
              <Stack $gap={3}><Chip>TAP</Chip><Chip>SEQ</Chip></Stack>
            </BpmGrid>
          </Display>
          <Transport $ml={20.5}>
            <TBtn><svg width="8" height="8"><circle cx="4" cy="4" r="4" fill="#fff" /></svg></TBtn>
            <TBtn><svg width="9" height="9"><circle cx="4.5" cy="4.5" r="3.8" fill="none" stroke="#fff" /><circle cx="4.5" cy="4.5" r="1.5" fill="#fff" /></svg></TBtn>
            <TBtn><InMark>IN<P w={12} h={4} vb="0 0 12 4" d="M.6 0V3H11.4V0" /></InMark></TBtn>
          </Transport>
          <Transport $ml={5.5}>
            <TBtn><svg width="6" height="6"><rect width="6" height="6" fill="#fff" /></svg></TBtn>
            <TBtn $on><svg width="6" height="8"><path d="M0 0L6 4L0 8Z" fill="#fff" /></svg></TBtn>
            <TBtn><svg width="9" height="8"><path d="M0 0L6 4L0 8ZM7 0H8.6V8H7Z" fill="#fff" /></svg></TBtn>
          </Transport>
          <Title>MPC + Channel Mixer (Monroe)</Title>
          <WinBtns>
            <P w={9} h={9} vb="0 0 9 9" d="M1 4.8H8" />
            <P w={9} h={9} vb="0 0 9 9" d="M.7 .7H8.3V8.3H.7Z" />
            <P w={9} h={9} vb="0 0 9 9" d="M1.2 1.2L7.8 7.8M7.8 1.2L1.2 7.8" />
          </WinBtns>
          <Status>
            <Stack $gap={4}><Lamp /><Lamp $flip /></Stack>
            <Stack $gap={4}>
              <StatusRow>
                <StatusChip $dark><Auto /></StatusChip>
                <StatusChip><P w={11} h={8} vb="0 0 11 8" d="M1.5 1L9.5 7.5M2 1V7H8M4 5C5.5 2 7 1.5 10 1.5" /></StatusChip>
                <StatusChip><P w={11} h={8} vb="0 0 11 8" sw={1.3} d="M1.5 3V5M3.5 1.5V6.5M5.5 2V6M7.5 1V7M9.5 2.5V5.5M3 1L8.5 7.5" /></StatusChip>
              </StatusRow>
              <svg width="63" height="12" viewBox="0 0 63 12">
                <rect width="63" height="12" fill="#120609" /><rect y="8" width="43" height="3" fill="#3c3a3c" />
                <rect y="1" width="13" height="3" fill="#46a367" /><rect y="4.5" width="14" height="3" fill="#46a367" />
                <rect x="14" y="1" width="29" height="6" fill="#0b1a10" /><path d="M43.5 0V8" stroke="#e0c040" /><path d="M43.5 7.5L45.5 10.5H41.5Z" fill="#fff" />
              </svg>
            </Stack>
          </Status>
        </Header>

        <Body>
          <Side>
            <SideTabs>
              <SideTab $on><Grid9 />MIDI</SideTab>
              <SideTab><Spark />AUDIO</SideTab>
            </SideTabs>
            <SectionHead kind="SEQUENCE" name="1 Sequence 01" />
            <SecBody $h={51.5}>
              <FieldRow>Bars<Field>16</Field></FieldRow>
              <FieldRow>BPM<Field>100.00</Field></FieldRow>
              <FieldRow>Loop<Field $blue><P w={15} h={8} vb="0 0 15 8" sw={1.6} d="M8.5 6.5H3.5A2.4 2.4 0 0 1 3.5 1.3H11.5A2.4 2.4 0 0 1 11.5 6.5H10M8 3.6V6.6H11" /></Field></FieldRow>
            </SecBody>
            <SectionHead kind="TRACK" name="6 Live Drums" />
            <SecBody $h={86}>
              <TypeRow>
                <TypeCell><Pads s={7} /></TypeCell><TypeCell><P w={8} h={8} d="M1 1H13V13H1ZM5 1V13M9 1V13" sw={1.8} /></TypeCell>
                <TypeCell $on><Plug s={10} /></TypeCell><TypeCell><P w={8} h={8} d="M3 12A6 6 0 1 1 11 12M4 8H10V12H4Z" sw={1.8} /></TypeCell>
                <TypeCell><P w={8} h={8} d="M2 1H12V13H2ZM5 5H9V9H5Z" sw={1.8} /></TypeCell><TypeCell>CV</TypeCell>
              </TypeRow>
              <FieldRow>Length<Field>Seq</Field></FieldRow>
              <FieldRow>Velo<Field>100</Field></FieldRow>
              <FieldRow>Trans<Field>Off</Field></FieldRow>
              <FieldRow><span /><Pair><PairBtn $on>MUTE</PairBtn><PairBtn>SOLO</PairBtn></Pair></FieldRow>
            </SecBody>
            <SectionHead kind="PROGRAM" name="Ezdrms" add />
            <SecBody $h={38}>
              <FieldRow>Plugin
                <Pair>
                  <Field $pad={7} $w={70}>EZdrummer<Push /><Caret c="#44454a" s={4} /></Field>
                  <Push />
                  <P w={10} h={9} vb="0 0 10 9" d="M5 1H1V8H9V5M6 1H9V3.5M9 1L5 5M3 1V3" />
                </Pair>
              </FieldRow>
              <FieldRow>Preset
                <Field $pad={4}>
                  <svg width="5" height="9" viewBox="0 0 5 9"><path d="M0 3.5L2.5 0L5 3.5ZM0 5.5L2.5 9L5 5.5Z" fill="#9a9ba0" /></svg>
                  <PresetName>Basic</PresetName><Push /><Caret c="#7a7b80" s={5} />
                </Field>
              </FieldRow>
            </SecBody>
            <SideStrips>
              <GhostStrip>
                <svg width="70" height="80" viewBox="0 0 70 80">
                  <rect x="10" y="11" width="14" height="15" fill="#4a4b50" /><path d="M17 4V76" stroke="#303136" />
                  <path d="M8 28H15M8 42H15M8 58H15M8 76H15M42 9H60M42 20H60M42 28H60M42 42H60M42 56H60M42 76H60" stroke="#45464b" strokeWidth=".8" />
                </svg>
                <Unavailable><P w={6} h={7} vb="0 0 6 7" d="M.6 0V6.3H6M1 1L5 5M2 3L5.5 1" sw={0.8} />Unavailable</Unavailable>
              </GhostStrip>
              <Strip side mute name="" icon={<Plug />} fader={{ cap: 35, peak: 43, peakColor: "#6f8a3a" }} />
            </SideStrips>
          </Side>

          <Main>
            <ToolRow>
              <P w={16} h={9} vb="0 0 16 9" sw={0.9} d="M1 7.5L4 3L7 1.5L10 6.5H16M9 2H15M9 4.2H15" />
              <VolLabel>Volume<Caret s={5.5} /></VolLabel>
              <Tools>
                <Tool $on><svg width="8" height="8" viewBox="0 0 8 8"><rect x=".6" y=".6" width="6.8" height="6.8" fill="none" stroke="currentColor" strokeWidth="1.1" strokeDasharray="1.5 1" /></svg></Tool>
                <Tool><P w={7} h={8} vb="0 0 7 8" fill d="M.5 0L6.5 4.5H3.8L5.3 7.4L4.2 8L2.7 5L.5 6.6Z" /></Tool>
                <Tool><svg width="9" height="8" viewBox="0 0 9 8"><path d="M3 0L6 3L3.5 5.5L.5 3Z" fill="currentColor" /><path d="M6 3L8.5 5A1.5 1.5 0 0 1 6 7.3L3.5 5.5" fill="none" stroke="currentColor" /></svg></Tool>
                <Tool><P w={10} h={9} vb="0 0 10 9" d="M.8 1.6L9.2 5.2M4.2 .4L4.8 3.4L2.2 8.4M5 3.6L6.6 8.2" sw={1.2} /></Tool>
                <Tool><P w={9} h={8} vb="0 0 9 8" d="M1 3.3H2.4L5 1.2V7L2.4 5.2H1ZM8.4 .6L6 3.2M6.4 4.2L8.6 5.2M1 .4L7.4 7.6" sw={1.2} /></Tool>
              </Tools>
              <Push />
              <svg width="12" height="9" viewBox="0 0 12 9" fill="none"><path d="M.6 0V9M2 2H5M2 6.5H5" stroke="#c9c9cc" /><path d="M6 1.5H9A2.5 2.5 0 0 1 9 6.8H6" stroke="#c01d48" strokeWidth="1.5" /></svg>
              <Tool $w={19} />
              <svg width="11" height="9" viewBox="0 0 11 9" fill="none" stroke="#d8d4cc" strokeWidth="1.4"><path d="M3.5 0.8L1 3L3.5 5.2M1 3H8A2.3 2.3 0 0 1 8 7.8H5" /></svg>
              <Tool $w={9.5} />
              <svg width="11" height="9" viewBox="0 0 11 9" fill="none" stroke="#6a6b70" strokeWidth="1.3"><path d="M7.5 .8L10 3L7.5 5.2M10 3H3A2.3 2.3 0 0 0 3 7.8H6" /></svg>
              <Tool $w={22} />
              <Lines c="#44454a" />
            </ToolRow>
            <RulerRow><Ruler /></RulerRow>
            <Arrange>
              <Heads>
                <TrackHead $h={11.2}>
                  <TrackTag />
                  <TrackInfo $up><MiniTop><Mini $c={RED}>M</Mini><Mini>S</Mini></MiniTop></TrackInfo>
                </TrackHead>
                {TRACKS.map((t) => (
                  <TrackHead key={t.n} $h={t.last ? 28.2 : 41.2} $on={t.on}>
                    <TrackTag $on={t.on}>{t.n}{t.keys ? <Keys s={5} /> : <Plug s={6} />}</TrackTag>
                    <TrackInfo>
                      <TrackName>{t.name}</TrackName>
                      <TrackSel $on={t.on}>{t.sel}<Caret s={5} /></TrackSel>
                      {!t.last && <MiniMS><Mini $c={t.m ? RED : undefined}>M</Mini><Mini $c={t.s ? GREEN : undefined}>S</Mini></MiniMS>}
                    </TrackInfo>
                  </TrackHead>
                ))}
              </Heads>
              <Clips />
              <VScroll><VThumb /><svg width="6" height="90" viewBox="0 0 6 90"><path d="M1 54L3 82V54Z" fill="#2d2e33" /><path d="M0 82L5 85L0 88Z" fill="#6a6b70" /></svg></VScroll>
            </Arrange>
            <HScroll><HThumb /><Caret c="#6a6b70" s={6} /><svg width="32" height="4" viewBox="0 0 32 4"><path d="M0 4L32 0V4Z" fill="#2f3035" /></svg></HScroll>
            <Tabs>
              <Tab $ml={11.5} $w={62} $dim><Grid9 />MIDI TRACKS</Tab>
              <Tab $ml={10.5} $w={76}><Spark />AUDIO TRACKS</Tab>
              <TabSplit />
              <Tab $ml={11} $w={66}><Pads />PROGRAMS</Tab>
              <TabSplit />
              <Tab $ml={11.5} $w={52} $dim><P w={6} h={7} vb="0 0 6 7" fill d="M0 0H6V4L3 7L0 4Z" />SUBMIXES</Tab>
              <Tab $ml={11.5} $w={50}><P w={7} h={7} vb="0 0 7 7" d="M1 5L3 3M1 2.5V5H3.5M2.5 .7H6.4V6.3H4.5" />RETURNS</Tab>
              <Tab $ml={9.5} $w={60}><Crown />MASTERS</Tab>
              <Push /><Lines />
            </Tabs>
            <Mixer>
              <Gutter $w={12.5}>
                <P w={8} h={8} vb="0 0 8 8" d="M1.5 2H6.5V6H1.5ZM4 0V2M4 6V8" />
                <Pads s={7} />
              </Gutter>
              <Gutter $w={12.3}><VText>AUDIO TRACKS</VText></Gutter>
              <Bank $w={70}>
                <BankStrips><Strip input mute kind="blue" name="Audio 001" icon={<WaveIcon />} fader={{ cap: 37.7 }} /></BankStrips>
                <BankScroll $t={70} />
              </Bank>
              <Gutter $w={13.2}><VText>PROGRAMS</VText></Gutter>
              <Bank $w={816}>
                <BankStrips>{PROGRAMS.map((p) => <Strip key={p.name} {...p} />)}</BankStrips>
                <BankScroll $t={547} />
              </Bank>
              <Gutter $w={15}><VText $low>MASTERS</VText></Gutter>
              <Bank $w={69.5}>
                <BankStrips><Strip master kind="grey" name="Outputs 1/2" icon={<Crown />} inserts={[["XYFX", true], ["CLA M. Stereo", true]]} fader={{ cap: 38, peak: 40, peakColor: "#a5b53a", level: 19 }} /></BankStrips>
                <BankScroll $t={3} />
              </Bank>
            </Mixer>
          </Main>
        </Body>

        <BottomBar>
          <BarItem $w={30} $bright><P w={5} h={8} vb="0 0 5 8" fill d="M2 0H4.2V1.6H2ZM.8 2.6H3.8L3 6.6H4.2V8H.6L1.6 4H.6Z" /></BarItem>
          <TabSplit />
          <BarItem $w={26} $bright><svg width="8" height="8"><rect x=".5" y=".5" width="7" height="7" fill="none" stroke="currentColor" /><rect x="2" y="2" width="4" height="4" fill="currentColor" /></svg></BarItem>
          <BarItem $w={18}><Pads s={8} /></BarItem>
          <BarItem $w={24}><Pads s={8} /></BarItem>
          <BarItem $w={24}><Lines c="#5d5e63" /></BarItem>
          <TabSplit />
          <BarItem $w={24}><Pads s={8} /></BarItem>
          <Push />
          <BarItem $w={32}><P w={9} h={8} vb="0 0 9 8" d="M0 1H9M0 4H9M0 7H9" sw={1.3} /></BarItem>
          <BarItem $w={22}><P w={9} h={8} vb="0 0 9 8" d="M0 1H9M0 4H6M0 7H8M.6 0V8" /></BarItem>
          <BarItem $w={22}><P w={8} h={9} vb="0 0 8 9" d="M1 .6H7V8.4H1ZM3 4A1.2 1.2 0 1 1 3 4.1" sw={1.5} /></BarItem>
          <BarItem $w={5} /><TabSplit />
          <BarItem $w={28} $bright>
            <svg width="10" height="10" viewBox="0 0 10 10"><path d="M0 0H10V8H5L3 10V8H0Z" fill="currentColor" /><text x="3" y="6.8" fontSize="7" fontWeight="700" fontFamily="Roboto, sans-serif" fill="#333">?</text></svg>
          </BarItem>
        </BottomBar>

        <Taskbar>
          <Task><P w={12} h={12} vb="0 0 12 12" fill d="M0 1.6L5.3 .9V5.6H0ZM6 .8L12 0V5.6H6ZM0 6.3H5.3V11.1L0 10.4ZM6 6.3H12V12L6 11.2Z" /></Task>
          <Task><svg width="11" height="11"><circle cx="5.5" cy="5.5" r="4.6" fill="none" stroke="#fff" strokeWidth="1.5" /></svg></Task>
          <Task><P w={12} h={11} vb="0 0 12 11" d="M1 0V1.5H6.5V0M1 3.5H6.5V7.5H1ZM1 11V9.5H6.5V11M10 0V3M10 5.5V11M9 4H11V5.3H9Z" /></Task>
          <Task><svg width="12" height="10" viewBox="0 0 12 10"><path d="M0 0H5L6 1.5H12V10H0Z" fill="#f3cf5b" /><path d="M2.5 5H9.5V10H8V7.5H4V10H2.5Z" fill="#3e9bd8" /></svg></Task>
          <Task><svg width="11" height="11" viewBox="0 0 11 11"><path d="M0 3H11V11H0Z" fill="#f4f4f4" /><path d="M3.5 3V.7H7.5V3" fill="none" stroke="#f4f4f4" /><path d="M3 4.5H5.2V6.7H3Z" fill="#e34a2a" /><path d="M5.8 4.5H8V6.7H5.8Z" fill="#6db33f" /><path d="M3 7.3H5.2V9.5H3Z" fill="#2f9be0" /><path d="M5.8 7.3H8V9.5H5.8Z" fill="#f2b21b" /></svg></Task>
          <Task><svg width="12" height="10" viewBox="0 0 12 10"><path d="M0 3.5L6 0L12 3.5V10H0Z" fill="#f2f2f2" /><path d="M0 3.5L6 6.5L12 3.5Z" fill="#0b171e" /></svg></Task>
          <Task><svg width="11" height="11" viewBox="0 0 12 12"><circle cx="6" cy="6" r="6" fill="#d9432f" /><path d="M6 6L.8 3A6 6 0 0 0 5.5 12Z" fill="#37a053" /><path d="M6 6L5.5 12A6 6 0 0 0 11.6 4H6Z" fill="#f3c62e" /><circle cx="6" cy="6" r="2.7" fill="#fff" /><circle cx="6" cy="6" r="2.1" fill="#4a87e8" /></svg></Task>
          <Task><svg width="11" height="12" viewBox="0 0 11 12"><rect width="11" height="12" fill="#e2552b" /><path d="M5.5 2C8 5 8.5 6.5 7.8 8.3C7 10 4 10 3.2 8.3C2.5 6.5 4.5 5.5 5.5 2Z" fill="none" stroke="#fff" /></svg></Task>
          <Task $on $line><svg width="11" height="11" viewBox="0 0 11 11"><rect width="11" height="11" fill="#4a0b12" /><path d="M1 1H5V5H1ZM6 1H10V5H6ZM1 6H5V10H1ZM6 6H10V10H6Z" fill="#b8202c" /></svg></Task>
          <Task><P w={12} h={10} vb="0 0 12 10" d="M.5 0L4 4V8M11.5 0L8 4V8M4 3.5H8M4 8L1 10M8 8L11 10M6 3V9" sw={1.3} /></Task>
          <Task><svg width="10" height="10" viewBox="0 0 10 10"><rect width="10" height="10" rx="1" fill="#eee" /><path d="M2 0L5 4L0 5M5 4L10 3M5 4L6 10M0 8L3 7" stroke="#0b171e" strokeWidth="1.3" fill="none" /></svg></Task>
          <Task><svg width="12" height="12" viewBox="0 0 12 12"><rect x=".5" y=".5" width="11" height="11" fill="#0d2734" stroke="#3d93b5" /><path d="M3.4 3L6 9L8.6 3" fill="none" stroke="#5fc4e8" strokeWidth="1.1" /></svg></Task>
          <Task><svg width="11" height="9" viewBox="0 0 11 9"><path d="M1 1H7L10 3V8H2L0 6Z" fill="#12284a" stroke="#2f7fc0" strokeWidth=".9" /><path d="M3 4H8" stroke="#7ad0f5" strokeWidth="1.4" /><path d="M7 7.5H10" stroke="#d03030" /></svg></Task>
          <Task><P w={9} h={9} vb="0 0 9 9" fill d="M1 2L3 3L4 1L5 3L8 0L6.5 4L9 4.5L6 5.5L5.5 9L3.5 8L1.5 8.5L2 6L0 4.5L2 4Z" /></Task>
          <Task $line><svg width="11" height="11" viewBox="0 0 11 11" fill="none" stroke="#b9bec0"><circle cx="5.5" cy="5.5" r="4.8" /><path d="M5.5 5.5L5 2M5.5 5.5L8.8 6.5M5.5 5.5L3 8" strokeWidth="1.4" /></svg></Task>
          <Tray>
            <TrayItem $w={20}><P w={10} h={10} vb="0 0 10 10" d="M4 3.5A1.6 1.6 0 1 1 4 3.6M1 10C1 7 5 7 5 10M7.5 1.8A1.4 1.4 0 1 1 7.5 1.9M6.5 5C9 4.5 9.5 6 9.5 7.5" sw={0.9} /></TrayItem>
            <TrayItem $w={20}><P w={8} h={5} vb="0 0 8 5" d="M.5 4.5L4 1L7.5 4.5" /></TrayItem>
            <TrayItem $w={15}><P w={8} h={8} vb="0 0 8 8" d="M1 8A7 7 0 0 1 8 1M3.3 8A4.7 4.7 0 0 1 8 3.3M5.6 8A2.4 2.4 0 0 1 8 5.6" /></TrayItem>
            <TrayItem $w={18}><P w={12} h={9} vb="0 0 12 9" d="M.5 3H2.5L5 .8V8.2L2.5 6H.5ZM6.5 3A2 2 0 0 1 6.5 6M8 1.5A4 4 0 0 1 8 7.5M9.6 .3A6 6 0 0 1 9.6 8.7" sw={0.9} /></TrayItem>
            <TrayItem $w={36}>3:02 PM</TrayItem>
            <TrayItem $w={36}><svg width="11" height="11" viewBox="0 0 11 11"><path d="M0 0H11V8.5H8V11L5 8.5H0Z" fill="#fff" /><path d="M2 2.5H9M2 4.3H9M2 6.1H7" stroke="#1b2a31" strokeWidth=".8" /></svg></TrayItem>
          </Tray>
        </Taskbar>
      </Window>
      <Cursor><svg width="9" height="13" viewBox="0 0 9 13"><path d="M1 .8V10.6L3.3 8.5L4.9 12.2L6.5 11.5L4.9 7.9H8Z" fill="#fff" stroke="#222" strokeWidth=".6" /></svg></Cursor>
      <Caption $x={146.5} $top={529} $size={41} $ls={0.02}>Learn my approach to music production!!</Caption>
      <Caption $x={148.5} $top={578.5} $size={41} $ls={1}>www.donyeamusic.biz/ptp</Caption>
      <Caption $x={146} $top={656.5} $size={50} $ls={0.05} $hot>Follow: @donny4ggg on instagram</Caption>
    </Screen>
  );
}
